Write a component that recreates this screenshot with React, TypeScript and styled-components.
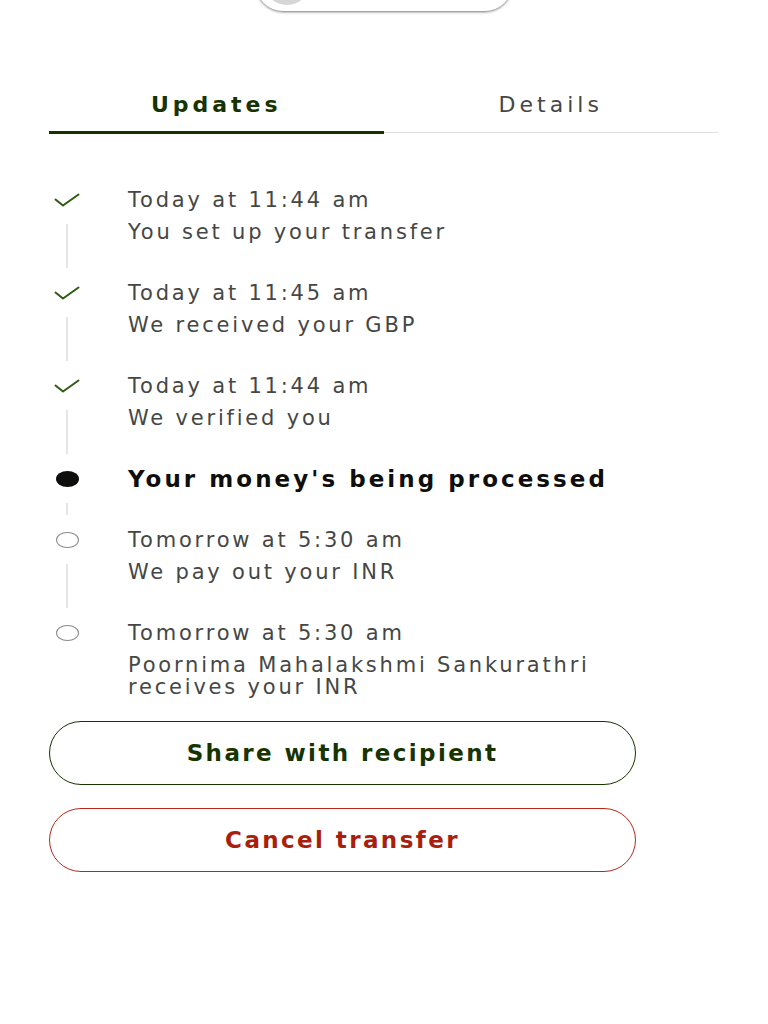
import styled, { createGlobalStyle } from 'styled-components'

type StepState = 'done' | 'current' | 'pending'

interface Step {
  state: StepState
  title: string
  lines?: string[]
}

const steps: Step[] = [
  { state: 'done', title: 'Today at 11:44 am', lines: ['You set up your transfer'] },
  { state: 'done', title: 'Today at 11:45 am', lines: ['We received your GBP'] },
  { state: 'done', title: 'Today at 11:44 am', lines: ['We verified you'] },
  { state: 'current', title: "Your money's being processed" },
  { state: 'pending', title: 'Tomorrow at 5:30 am', lines: ['We pay out your INR'] },
  {
    state: 'pending',
    title: 'Tomorrow at 5:30 am',
    lines: ['Poornima Mahalakshmi Sankurathri', 'receives your INR'],
  },
]

const GlobalStyle = createGlobalStyle`
  html, body {
    margin: 0;
    padding: 0;
    background: #ffffff;
  }
  body {
    font-family: "DejaVu Sans", "Noto Sans", sans-serif;
    color: #454745;
  }
  * {
    box-sizing: border-box;
  }
`

const Page = styled.div`
  width: 768px;
  height: 1024px;
  overflow: hidden;
  padding: 0 50px 0 49px;
  display: flex;
  flex-direction: column;
`

const HandleRow = styled.div`
  display: flex;
  justify-content: center;
`

const Handle = styled.div`
  width: 258px;
  height: 56px;
  margin-top: -44px;
  border: 1px solid #a3a3a3;
  border-radius: 28px;
  box-shadow: 0 1px 2px rgba(0, 0, 0, 0.25);
  display: flex;
  align-items: flex-end;
  padding: 0 0 6px 8px;
`

const HandleKnob = styled.div`
  width: 46px;
  height: 44px;
  border-radius: 50%;
  background: #d6d6d4;
`

const Tabs = styled.div`
  display: grid;
  grid-template-columns: 1fr 1fr;
  align-items: start;
  margin-top: 80px;
`

const Tab = styled.button<{ $active?: boolean }>`
  appearance: none;
  background: none;
  border: 0;
  border-bottom: ${(p) => (p.$active ? '3px solid #163300' : '1px solid #e0e0e0')};
  height: ${(p) => (p.$active ? '42px' : '41px')};
  padding: 0 0 14px;
  margin: 0;
  font-family: "DejaVu Sans", sans-serif;
  font-size: 22px;
  line-height: 26px;
  letter-spacing: 4px;
  font-weight: ${(p) => (p.$active ? 700 : 400)};
  color: ${(p) => (p.$active ? '#163300' : '#454745')};
  cursor: pointer;
`

const Timeline = styled.ol`
  list-style: none;
  margin: 55px 0 0;
  padding: 0;
`

const StepRow = styled.li`
  display: grid;
  grid-template-columns: 36px 1fr;
  column-gap: 43px;
`

const Rail = styled.div`
  display: flex;
  flex-direction: column;
  align-items: center;
`

const IconBox = styled.div`
  height: 22px;
  display: flex;
  align-items: center;
  justify-content: center;
`

const Connector = styled.div`
  flex: 1;
  width: 2px;
  background: #e6e6e5;
  margin: 13px 0 14px;
`

const Dot = styled.div<{ $filled?: boolean }>`
  width: 23px;
  height: 16px;
  border-radius: 50%;
  background: ${(p) => (p.$filled ? '#0e0f0c' : 'transparent')};
  border: ${(p) => (p.$filled ? 'none' : '1.5px solid #8a8a88')};
`

const Content = styled.div<{ $last?: boolean }>`
  padding-bottom: ${(p) => (p.$last ? '0' : '39px')};
`

const Title = styled.div<{ $strong?: boolean }>`
  font-size: ${(p) => (p.$strong ? '23px' : '21px')};
  line-height: 22px;
  letter-spacing: ${(p) => (p.$strong ? '3.05px' : '2.8px')};
  font-weight: ${(p) => (p.$strong ? 700 : 400)};
  color: ${(p) => (p.$strong ? '#0e0f0c' : '#454745')};
  white-space: nowrap;
`

const Description = styled.div`
  margin-top: 10px;
  font-size: 21px;
  line-height: 22px;
  letter-spacing: 2.8px;
  color: #454745;
  white-space: nowrap;
`

const Actions = styled.div`
  display: flex;
  flex-direction: column;
  gap: 23px;
  margin-top: 23px;
  width: 587px;
`

const PillButton = styled.button<{ $danger?: boolean }>`
  appearance: none;
  height: 64px;
  border-radius: 32px;
  background: #ffffff;
  border: 1.5px solid ${(p) => (p.$danger ? '#b8281a' : '#163300')};
  color: ${(p) => (p.$danger ? '#a8200d' : '#163300')};
  font-family: "DejaVu Sans", sans-serif;
  font-size: 23px;
  font-weight: 700;
  letter-spacing: 2.4px;
  cursor: pointer;
`

function CheckIcon() {
  return (
    <svg width="26" height="14" viewBox="0 0 26 14" fill="none">
      <path d="M1.5 6.5 L9 12.5 L24.5 1.5" stroke="#2f5a12" strokeWidth="2" strokeLinecap="round" strokeLinejoin="round" />
    </svg>
  )
}

function StepIcon({ state }: { state: StepState }) {
  if (state === 'done') return <CheckIcon />
  return <Dot $filled={state === 'current'} />
}

export default function App() {
  return (
    <>
      <GlobalStyle />
      <Page>
        <HandleRow>
          <Handle>
            <HandleKnob />
          </Handle>
        </HandleRow>

        <Tabs>
          <Tab $active>Updates</Tab>
          <Tab>Details</Tab>
        </Tabs>

        <Timeline>
          {steps.map((step, i) => {
            const last = i === steps.length - 1
            return (
              <StepRow key={i}>
                <Rail>
                  <IconBox>
                    <StepIcon state={step.state} />
                  </IconBox>
                  {!last && <Connector />}
                </Rail>
                <Content $last={last}>
                  <Title $strong={step.state === 'current'}>{step.title}</Title>
                  {step.lines && (
                    <Description>
                      {step.lines.map((line) => (
                        <div key={line}>{line}</div>
                      ))}
                    </Description>
                  )}
                </Content>
              </StepRow>
            )
          })}
        </Timeline>

        <Actions>
          <PillButton type="button">Share with recipient</PillButton>
          <PillButton type="button" $danger>
            Cancel transfer
          </PillButton>
        </Actions>
      </Page>
    </>
  )
}
